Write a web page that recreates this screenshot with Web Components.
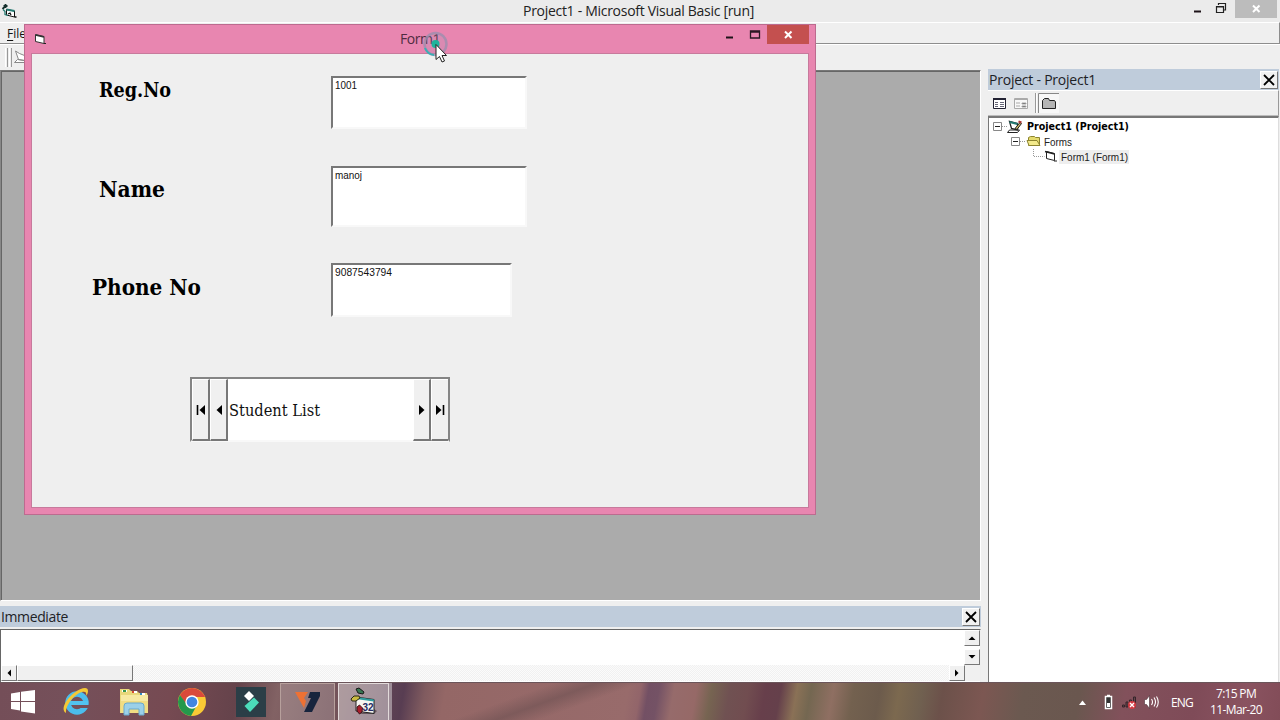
<!DOCTYPE html>
<html lang="en">
<head>
<meta charset="utf-8">
<title>Project1</title>
<style>
  body {
    margin: 0;
    width: 1280px;
    height: 720px;
    overflow: hidden;
    font-family: "Open Sans", "Noto Sans", sans-serif;
    color: #222;
  }
</style>
</head>
<body>
<vb-desktop></vb-desktop>

<script>
// Creates a custom element whose shadow root is cloned from a template.
const defineElement = (name, html, setup) => {
  const template = document.createElement("template");
  template.innerHTML = html;

  window.customElements.define(name, class extends HTMLElement {
    constructor () {
      super();
      this.attachShadow({ mode: "open" });
      this.shadowRoot.appendChild(template.content.cloneNode(true));
    }

    connectedCallback () {
      if (setup) {
        setup(this, this.shadowRoot);
      }
    }
  });
};

// One line of text that fills the given width: letter-spaced, or scaled with "squeeze".
defineElement("text-line", `
  <style>
    :host { display: block; flex: none; }
    span { display: block; width: max-content; white-space: pre; transform-origin: 0 0; }
  </style>
  <span></span>
`, (host, root) => {
  const span = root.querySelector("span");
  const value = host.getAttribute("value");
  const width = Number(host.getAttribute("width"));
  span.textContent = value;
  host.style.width = width + "px";
  const natural = span.getBoundingClientRect().width;
  if (host.hasAttribute("squeeze")) {
    span.style.transform = `scaleX(${width / natural})`;
  } else {
    span.style.letterSpacing = (width - natural) / value.length + "px";
  }
});

defineElement("caption-buttons", `
  <style>
    :host { display: block; flex: none; }
    svg { display: block; }
    .close { fill: #c4504f; }
    :host([inactive]) .close { fill: #bcbcbc; }
    .restore, :host([inactive]) .max { display: none; }
    :host([inactive]) .restore { display: inline; }
  </style>
  <svg width="90" height="19" viewBox="0 0 90 19">
    <rect class="close" x="48" y="0" width="42" height="19"/>
    <path d="M66 6.500l6.500 6.500M72.500 6.500l-6.500 6.500" stroke="#fff" stroke-width="2"/>
    <path d="M7 12.500h7" stroke="#1d1218" stroke-width="2"/>
    <path class="max" d="M31.500 6h9v7h-9zM31 7h10" fill="none" stroke="#2b1722" stroke-width="1.300"/>
    <path class="restore" d="M29.500 7.500h7v6h-7zM29 8h8M31.500 6v-1.500h7v6.500h-1.500" fill="none" stroke="#222" stroke-width="1.200"/>
  </svg>
`);

defineElement("title-bar", `
  <style>
    :host { display: flex; height: 22px; background: #ebebeb; box-sizing: border-box; justify-content: space-between; }
    svg { display: block; margin: 2px 0 0 1px; }
    text-line { font-size: 14px; line-height: 22px; }
    caption-buttons { margin: -1px 3px 0 0; }
    .left { width: 90px; }
  </style>
  <div class="left">
    <svg width="17" height="17" viewBox="0 0 17 17">
      <path d="M5.500 7.500l8 1.500v6l-8-2z" fill="#fff" stroke="#111"/>
      <path d="M5.500 7.500l8 1.500" stroke="#247a72" stroke-width="2"/>
      <path d="M4.500 2v4M2.500 4h4M1.500 7l2-2" stroke="#152f2c" stroke-width="1.800"/>
      <path d="M2 7.500l2 2v3l3 1" fill="none" stroke="#247a72" stroke-width="1.300"/>
      <path d="M7 12l2-1 1 2M13.500 15h2" fill="none" stroke="#111" stroke-width="1.300"/>
    </svg>
  </div>
  <text-line value="Project1 - Microsoft Visual Basic [run]" width="231"></text-line>
  <caption-buttons inactive></caption-buttons>
`);

defineElement("menu-bar", `
  <style>
    :host { display: block; background: #efefef; height: 47px; }
    .menu { height: 22px; box-sizing: border-box; border-top: 1px solid #fff; border-bottom: 1px solid #8d8d8d; border-right: 1px solid #8d8d8d; font-size: 12px; line-height: 21px; padding-left: 7px; color: #111; }
    u { text-underline-offset: 2px; }
    .tools { display: flex; height: 22px; padding: 3px 0 0 5px; box-sizing: border-box; border-top: 1px solid #fff; }
    i { width: 1px; height: 19px; margin-right: 1px; border-left: 1px solid #fff; border-right: 1px solid #999; }
    svg { margin-left: -1px; }
  </style>
  <div class="menu"><u>F</u>ile</div>
  <div class="tools">
    <i></i><i></i>
    <svg width="18" height="17" viewBox="0 0 18 17">
      <path d="M3.500 3l4 2.500 5 2v5l-6-1zM2.500 14.500l3-3 7 1 2 2z" fill="#fff" stroke="#888"/>
    </svg>
  </div>
`);

defineElement("pane-title", `
  <style>
    :host { display: flex; align-items: center; justify-content: space-between; flex: none; height: 21px; background: #bfccdb; font-size: 14px; color: #1e2226; }
    text-line { line-height: 20px; margin-left: 1px; }
    svg { display: block; width: 18px; height: 18px; background: #f1f1f1; border: 1px solid; border-color: #fff #777 #777 #fff; box-sizing: border-box; margin-right: 1px; }
  </style>
  <svg viewBox="0 0 16 16"><path d="M3 3l10 10M13 3L3 13" stroke="#000" stroke-width="1.800"/></svg>
`, (host, root) => {
  const line = document.createElement("text-line");
  line.setAttribute("value", host.getAttribute("caption"));
  line.setAttribute("width", host.getAttribute("caption-width"));
  root.insertBefore(line, root.querySelector("svg"));
});

defineElement("scroll-button", `
  <style>
    :host { display: flex; flex: none; align-items: center; justify-content: center; width: 16px; height: 16px; box-sizing: border-box; background: #f0f0f0; border: 1px solid; border-color: #fff #777 #777 #fff; }
    :host([dir-to="up"]) svg { transform: rotate(-90deg); }
    :host([dir-to="down"]) svg { transform: rotate(90deg); }
    :host([dir-to="left"]) svg { transform: rotate(180deg); }
  </style>
  <svg width="8" height="8" viewBox="0 0 8 8"><path d="M2 .5v7L5.500 4z"/></svg>
`);

defineElement("immediate-pane", `
  <style>
    :host { display: block; height: 76px; }
    .box { display: flex; flex-direction: column; height: 53px; margin-top: 2px; box-sizing: border-box; background: #fff; border: 1px solid #666; border-right-color: #eee; border-bottom: 0; }
    .top { display: flex; justify-content: flex-end; height: 35px; }
    .vertical { display: flex; flex-direction: column; justify-content: space-between; width: 16px; }
    .bottom { display: flex; height: 16px; padding-right: 15px; background: #f0f0f0; }
    .thumb { width: 116px; box-sizing: border-box; background: #f0f0f0; border: 1px solid; border-color: #fff #777 #777 #fff; }
    .track { flex: 1; background: repeating-conic-gradient(#f1f1f1 0 25%, #fbfbfb 0 50%) 0 0 / 2px 2px; }
  </style>
  <pane-title caption="Immediate" caption-width="67"></pane-title>
  <div class="box">
    <div class="top">
      <div class="vertical">
        <scroll-button dir-to="up"></scroll-button>
        <scroll-button dir-to="down"></scroll-button>
      </div>
    </div>
    <div class="bottom">
      <scroll-button dir-to="left"></scroll-button>
      <div class="thumb"></div>
      <div class="track"></div>
      <scroll-button dir-to="right"></scroll-button>
    </div>
  </div>
`);

defineElement("project-explorer", `
  <style>
    :host { display: flex; flex-direction: column; width: 291px; }
    .tools { display: flex; height: 26px; box-sizing: border-box; border-bottom: 1px solid #bbb; border-right: 1px solid #999; border-top: 1px solid #fff; }
    .tree { flex: 1; box-sizing: border-box; background: #fff; border: 1px solid #777; border-top-width: 2px; border-right-color: #ddd; border-bottom: 0; padding-top: 1px; font: 11px "Liberation Sans", sans-serif; color: #222; }
    .row { display: flex; height: 15px; align-items: center; }
    .row svg { flex: none; display: block; }
    .root { font: bold 11px "DejaVu Sans", "Liberation Sans", sans-serif; color: #000; }
    .sel { background: #eeeeee; padding: 0 1px 0 2px; line-height: 14px; }
    .root text-line { margin-left: 2px; }
  </style>
  <pane-title caption="Project - Project1" caption-width="107"></pane-title>
  <div class="tools">
    <svg width="80" height="25" viewBox="0 0 80 25">
      <path d="M5.500 7.500h12v10h-12z" fill="#fff" stroke="#223"/>
      <path d="M5 8h13" stroke="#223" stroke-width="2"/>
      <path d="M7 11.500h3M7 13.500h3M7 15.500h3M12 11.500h4M12 13.500h4M12 15.500h4" stroke="#667"/>
      <path d="M26.500 7.500h13v10h-13z" fill="#f8f8f8" stroke="#aaa"/>
      <path d="M26 8.500h14M28 12h4M28 15h4M34 12h4v1h-4zM34 15h4v1h-4z" stroke="#aaa"/>
      <path d="M47.500 2v20" stroke="#999"/><path d="M48.500 2v20" stroke="#fff"/>
      <path d="M50 22V2h21v20z" fill="#f8f8f8"/><path d="M50.500 22V2.500H71" fill="none" stroke="#888"/>
      <path d="M54.500 17.500v-8l2-2h4l1 2h5l1 1.500v6.500z" fill="#b5b5b5" stroke="#222"/>
    </svg>
  </div>
  <div class="tree">
    <div class="row root">
      <svg width="36" height="15" viewBox="0 0 36 15">
        <path d="M4.500 3.500h8v8h-8z" fill="#fff" stroke="#888"/><path d="M6 7.500h5" stroke="#222"/>
        <path d="M13 7.500h5" stroke="#999" stroke-dasharray="1 1"/>
        <path d="M18.500 13.500l2-2.500h10l-2 2.500z" fill="#fff" stroke="#222"/>
        <path d="M20.500 2.500l8 2v6.500l-6-1.500z" fill="#fff" stroke="#222" stroke-width="1.300"/>
        <path d="M20.500 3l8 2" stroke="#247a72" stroke-width="2"/>
        <path d="M26 9.500l5-6 1.500 1-4.500 6z" fill="#c9b968" stroke="#222"/><path d="M29.500 2.500l3 1" stroke="#a33" stroke-width="2"/>
      </svg>
      <text-line value="Project1 (Project1)" width="102" squeeze></text-line>
    </div>
    <div class="row">
      <svg width="55" height="15" viewBox="0 0 55 15">
        <path d="M22.500 3.500h8v8h-8z" fill="#fff" stroke="#888"/><path d="M24 7.500h5" stroke="#222"/>
        <path d="M31 7.500h6" stroke="#999" stroke-dasharray="1 1"/>
        <path d="M39.500 11.500v-8l2-1h4l1 1h4v8z" fill="#e5db6e" stroke="#8c8430"/>
        <path d="M40 11.500l-2-5h10l3 5z" fill="#f3ea8c" stroke="#8c8430"/>
      </svg>
      <text-line value="Forms" width="28" squeeze></text-line>
    </div>
    <div class="row">
      <svg width="70" height="15" viewBox="0 0 70 15">
        <path d="M44.500 0v7.500h11" fill="none" stroke="#999" stroke-dasharray="1 1"/>
        <path d="M57.500 2.500l8 2v7l-8-2z" fill="#fff" stroke="#222"/><path d="M56 2.500l9.500 2.500" stroke="#222" stroke-width="1.600"/>
        <path d="M65 12h3" stroke="#222"/>
      </svg>
      <div class="sel"><text-line value="Form1 (Form1)" width="67" squeeze></text-line></div>
    </div>
  </div>
`);

defineElement("text-field", `
  <style>
    :host { display: block; box-sizing: border-box; background: #fff; border: 2px solid; border-color: #777 #f8f8f8 #f8f8f8 #777; font: 11px/13px "Liberation Sans", sans-serif; color: #111; padding: 1px 2px; }
  </style>
  <slot></slot>
`);

defineElement("data-control", `
  <style>
    :host { display: flex; width: 260px; height: 65px; box-sizing: border-box; border: 2px solid #858585; border-bottom-color: #f8f8f8; background: #fff; font: 16px "DejaVu Serif Condensed", "DejaVu Serif", serif; color: #111; }
    .caption { flex: 1; display: flex; align-items: center; padding: 2px 0 0 1px; }
    b { display: flex; align-items: center; justify-content: center; width: 18px; height: 62px; box-sizing: border-box; background: #f0f0f0; border-right: 2px solid #777; border-bottom: 2px solid #777; border-left: 1px solid #fff; border-top: 1px solid #fff; }
    b:last-child { border-right: 0; width: 17px; }
  </style>
  <b><svg width="10" height="12"><path d="M1.500 1v10" stroke="#000" stroke-width="1.600"/><path d="M9 1v10L3.500 6z"/></svg></b>
  <b><svg width="10" height="12"><path d="M8 1v10L2.500 6z"/></svg></b>
  <div class="caption"><slot></slot></div>
  <b><svg width="10" height="12"><path d="M2 1v10l5.500-5z"/></svg></b>
  <b><svg width="10" height="12"><path d="M1 1v10l5.500-5z"/><path d="M8.500 1v10" stroke="#000" stroke-width="1.600"/></svg></b>
`);

defineElement("form-window", `
  <style>
    :host { display: block; box-sizing: border-box; width: 792px; height: 491px; padding: 0 6px 6px; background: #e886b0; border: 1px solid #bc6b8f; }
    header { display: flex; height: 28px; color: #4f2c40; font-size: 14px; justify-content: space-between; }
    .icon { width: 90px; }
    .icon svg { display: block; margin: 8px 0 0 4px; }
    header text-line { line-height: 28px; }
    .client { height: 455px; box-sizing: border-box; border: 1px solid #c77a9c; background: #efefef; }
    ::slotted(*) { height: 100%; }
  </style>
  <header>
    <div class="icon">
      <svg width="12" height="12" viewBox="0 0 12 12">
        <path d="M.5 1.500l8.500 2v7l-8.500-2z" fill="#fff" stroke="#333"/><path d="M.5 2l8.500 2" stroke="#333" stroke-width="1.500"/><path d="M9 10.500h2" stroke="#222"/>
      </svg>
    </div>
    <text-line value="Form1" width="40"></text-line>
    <caption-buttons></caption-buttons>
  </header>
  <div class="client"><slot></slot></div>
`);

defineElement("student-form", `
  <style>
    :host { display: block; box-sizing: border-box; padding: 22px 0 0 60px; color: #000; }
    .row { display: flex; }
    .label { width: 232px; box-sizing: border-box; padding-left: 7px; flex: none; margin-right: 7px; font: bold 22px/28px "DejaVu Serif Condensed", "DejaVu Serif", serif; }
    .reg { height: 90px; }
    .reg .label { font-size: 20px; }
    .name { height: 97px; }
    .name .label { padding-top: 9px; }
    .phone { height: 114px; }
    .phone .label { padding: 10px 0 0; }
    text-field { width: 196px; height: 53px; }
    .name text-field { height: 61px; }
    .phone text-field { width: 181px; height: 54px; }
    data-control { margin-left: 98px; }
  </style>
  <div class="row reg">
    <div class="label"><text-line value="Reg.No" width="72" squeeze></text-line></div>
    <text-field><text-line value="1001" width="22" squeeze></text-line></text-field>
  </div>
  <div class="row name">
    <div class="label"><text-line value="Name" width="66" squeeze></text-line></div>
    <text-field><text-line value="manoj" width="27" squeeze></text-line></text-field>
  </div>
  <div class="row phone">
    <div class="label"><text-line value="Phone No" width="109" squeeze></text-line></div>
    <text-field><text-line value="9087543794" width="57" squeeze></text-line></text-field>
  </div>
  <data-control><text-line value="Student List" width="91" squeeze></text-line></data-control>
`);

defineElement("mouse-pointer", `
  <style>
    :host { display: block; }
    svg { display: block; }
  </style>
  <svg width="30" height="34" viewBox="0 0 30 34">
    <circle cx="13.500" cy="14" r="11" fill="#8f9fc4" fill-opacity=".15" stroke="#9c8fae" stroke-opacity=".8" stroke-width="2.500"/>
    <path d="M3 18a11 11 0 0 0 9 7" fill="none" stroke="#39aeb4" stroke-width="2"/>
    <circle cx="13.500" cy="14" r="4" fill="#1eb39b"/>
    <path d="M14 14.500v15l3.500-3 2.500 5.500 2.500-1-2.500-5.500h4.500z" fill="#fff" stroke="#222"/>
  </svg>
`);

defineElement("task-button", `
  <style>
    :host { display: flex; align-items: center; justify-content: center; flex: none; width: 58px; height: 38px; box-sizing: border-box; }
    :host([open]) { width: 55px; border: 1px solid #b7a09c; background: rgba(255, 255, 255, .18); }
    :host([active]) { width: 51px; border: 1px solid #e2dada; background: rgba(255, 255, 255, .42); margin-left: 3px; box-shadow: 3px 0 0 rgba(255, 255, 255, .4); }
  </style>
  <slot></slot>
`);

defineElement("system-tray", `
  <style>
    :host { display: flex; height: 38px; color: #fff; font-size: 12px; align-items: center; }
    svg { display: block; }
    .lang { margin-left: 11px; }
    .clock { display: flex; flex-direction: column; align-items: center; width: 56px; margin: 0 16px 0 15px; line-height: 16px; }
  </style>
  <svg width="82" height="18" viewBox="0 0 82 18">
    <path d="M1 12h7L4.500 7.500z" fill="#fff"/>
    <path d="M27.500 3.500h6v12h-6zM29 2.500h3" fill="#333" stroke="#fff" stroke-width="1.500"/><path d="M29 10h3v4h-3z" fill="#fff"/>
    <path d="M44.500 14v-2h2v2zM48 14v-5h2v5zM51.500 14V7h2v7zM55.500 14V4h2v10z" fill="#65474d" stroke="#35252b"/>
    <circle cx="54" cy="12" r="4" fill="#d33a42"/><path d="M52 10l4 4M56 10l-4 4" stroke="#fff" stroke-width="1.300"/>
    <path d="M66.500 6.500h2l3-4v13l-3-4h-2z" fill="#fff" stroke="#4c3339" stroke-width=".6"/>
    <path d="M73.500 6q2 3 0 6M76 4.500q3 4.500 0 9M78.500 3.500q3.500 5.500 0 11" fill="none" stroke="#fff" stroke-width="1.100"/>
  </svg>
  <text-line class="lang" value="ENG" width="22"></text-line>
  <div class="clock">
    <text-line value="7:15 PM" width="40"></text-line>
    <text-line value="11-Mar-20" width="52"></text-line>
  </div>
`);

defineElement("task-bar", `
  <style>
    :host {
      display: flex; justify-content: space-between; height: 38px; box-sizing: border-box; border-top: 1px solid #6b555a;
      background:
        linear-gradient(160deg, transparent 36%, rgba(115, 84, 85, .7) 50%, transparent 64%) 440px 0 / 210px 38px no-repeat,
        linear-gradient(100deg, #744e58 0, #75505a 70px, #764a52 170px, #65434b 235px, #826264 275px, #725259 340px, #583d52 399px, #805b5f 420px, #946766 440px, #986b6b 620px, #92656a 632px, #735064 640px, #745265 650px, #966b6b 665px, #966967 687px, #766451 702px, #705152 720px, #714d50 738px, #673f4b 755px, #65404b 770px, #8a7156 786px, #746751 800px, #8f6f62 822px, #73614f 842px, #6c5b4c 868px, #7c694f 887px, #706050 910px, #6c514a 930px, #7c5752 970px, #6b5950 1010px, #6a574f 1065px, #82515b 1110px, #7f4b58 1180px, #8a5360 1230px, #7d4853 1290px);
    }
    .tasks { display: flex; }
    svg { display: block; }
    .start { width: 45px; }
    .ie { width: 62px; }
    .files { width: 54px; }
    .chrome { width: 62px; }
    .wondershare { width: 55px; }
    [open] { margin-left: 2px; }
  </style>
  <div class="tasks">
    <task-button class="start"><svg width="26" height="26" viewBox="0 0 26 26"><path d="M1 4.500l9-1.500V12H1zM11 2.800L25 1v11H11zM1 13h9v8.500L1 20zM11 13h14v11.500l-14-2z" fill="#fff"/></svg></task-button>
    <task-button class="ie">
      <svg width="30" height="32" viewBox="0 0 30 32">
        <circle cx="16" cy="17" r="9" fill="none" stroke="#4bbdec" stroke-width="5.500"/>
        <path d="M9 17h18" stroke="#52c3f0" stroke-width="4"/><path d="M18 19h11l-2 3h-9z" fill="#744e58"/>
        <path d="M5 27C-1 24 5 13 13 7c7-5 14-7 14-2 0 2-1 4-2 5 1-4-1-5-4-4C13 8 4 20 5 27z" fill="#f4c936"/>
      </svg>
    </task-button>
    <task-button class="files">
      <svg width="32" height="30" viewBox="0 0 32 30">
        <path d="M2 5V2h9l2 2h6l2 2h8l1 4v16H2z" fill="#e8d77b"/>
        <path d="M3 8h27v18H3z" fill="#f7e9a2"/><path d="M3 14h27v12H3z" fill="#f1dd83"/>
        <path d="M4 4h5M14 5h5M22 7h5" stroke="#fff" stroke-width="2"/><path d="M5 4h3" stroke="#36974c" stroke-width="2"/><path d="M14 5h2" stroke="#d74830" stroke-width="2"/><path d="M22 7h2" stroke="#318ac2" stroke-width="2"/>
        <path d="M6 28V19q0-3 3-3h14q3 0 3 3v9h-5v-6H11v6z" fill="#9bd0e8" stroke="#68a9ce"/>
      </svg>
    </task-button>
    <task-button class="chrome">
      <svg width="30" height="30" viewBox="0 0 30 30">
        <circle cx="15" cy="15" r="14" fill="#f9ca35"/>
        <path d="M2.900 8A14 14 0 0 1 27.100 8L28 10H15l-6 8z" fill="#d94a3b"/>
        <path d="M2.900 8A14 14 0 0 0 14 29l6-11-9 1z" fill="#25984c"/>
        <circle cx="15" cy="15" r="6.700" fill="#fff"/><circle cx="15" cy="15" r="5.300" fill="#4285df"/>
      </svg>
    </task-button>
    <task-button class="wondershare">
      <svg width="30" height="30" viewBox="0 0 30 30"><path d="M0 0h30v30H0z" fill="#2b3e47"/><path d="M8 9l5-5 5 5-5 5z" fill="#fff"/><path d="M8.500 19L18 10.500l5 5L14 25z" fill="#4bdcba"/></svg>
    </task-button>
    <task-button open>
      <svg width="28" height="24" viewBox="0 0 28 24"><path d="M1 2h13l-4 6 2 3-2 7z" fill="#ed7134"/><path d="M16 2h10v4l-8 16h-8l7-14h-3z" fill="#17243d"/></svg>
    </task-button>
    <task-button active>
      <svg width="32" height="30" viewBox="0 0 32 30">
        <path d="M11 27h15l3-3-3-2z" fill="#67565c"/>
        <path d="M8 10l18 2.500v14L8 24z" fill="#f5f5f0" stroke="#222"/>
        <path d="M8 11l18 2.500" stroke="#2f9b9d" stroke-width="2"/>
        <path d="M8 2l3-1 5 4-1 2-5-1z" fill="#387652" stroke="#171717"/>
        <path d="M3 12l3-3h5l1 2-4 3H4z" fill="#c9ba42" stroke="#282814"/>
        <path d="M9 20l2.500-2 3 3-.5 4-2.500 2-2.500-3z" fill="#a91e2b" stroke="#3a1319"/>
        <text x="14.500" y="23.500" font-family="Liberation Sans" font-size="10" font-weight="bold" fill="#252b63">32</text>
      </svg>
    </task-button>
  </div>
  <system-tray></system-tray>
`);

defineElement("vb-desktop", `
  <style>
    :host { display: flex; flex-direction: column; position: relative; width: 1280px; height: 720px; background: #efefef; }
    .work { display: flex; height: 613px; gap: 7px; }
    .left { width: 981px; display: flex; flex-direction: column; justify-content: space-between; }
    .mdi { height: 531px; margin-top: 1px; box-sizing: border-box; background: #ababab; border: 1px solid #fff; border-top-color: #777; border-left: 1px solid #888; box-shadow: inset 1px 1px #666; }
    form-window { position: absolute; left: 24px; top: 24px; }
    mouse-pointer { position: absolute; left: 422px; top: 30px; }
  </style>
  <title-bar></title-bar>
  <menu-bar></menu-bar>
  <div class="work">
    <div class="left">
      <div class="mdi"></div>
      <immediate-pane></immediate-pane>
    </div>
    <project-explorer></project-explorer>
  </div>
  <task-bar></task-bar>
  <form-window><student-form></student-form></form-window>
  <mouse-pointer></mouse-pointer>
`);
</script>
</body>
</html>
